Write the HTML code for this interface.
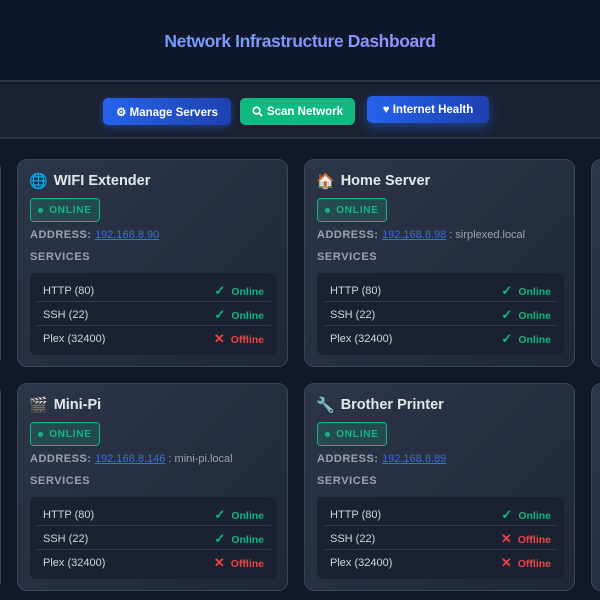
<!DOCTYPE html>
<html><head><style>
*{box-sizing:border-box;margin:0;padding:0}
body{width:600px;height:600px;overflow:hidden;background:#111827;font-family:"Liberation Sans",sans-serif;position:relative}
.hdr{position:absolute;left:0;top:0;width:600px;height:82px;background:#0f172a;border-bottom:2px solid #2a3446}
.hdr h1{position:absolute;top:31px;width:100%;text-align:center;font-size:17.5px;font-weight:bold;background:linear-gradient(90deg,#60a5fa,#a78bfa);-webkit-background-clip:text;color:transparent;letter-spacing:-0.4px}
.bar{position:absolute;left:0;top:84px;width:600px;height:55px;background:#1a2232;border-bottom:2px solid #2a3446}
.btn{position:absolute;height:27px;border-radius:5px;color:#fff;font-size:11.5px;font-weight:bold;display:flex;align-items:center;justify-content:center;gap:4px}
.blue{background:linear-gradient(90deg,#2563eb,#1e40af);box-shadow:0 2px 8px rgba(37,99,235,.4)}
.green{background:#10b981}
.card{position:absolute;width:271px;height:208px;border-radius:10px;background:linear-gradient(135deg,#2c3649,#1f2838);border:1px solid #3a4558;padding:0 12px}
.t{position:absolute;left:11px;top:12px;font-size:14.5px;font-weight:bold;color:#e5e7eb;display:flex;align-items:center;gap:6px}
.t span.i{font-size:15px;font-family:"DejaVu Sans",sans-serif}
.pill{position:absolute;left:12px;top:38px;width:70px;height:24px;border:1px solid #10b981;border-radius:4px;background:rgba(16,185,129,.18);color:#10b981;font-size:10px;font-weight:bold;letter-spacing:.8px;display:flex;align-items:center;justify-content:center;gap:6px}
.pill:before{content:"";width:5px;height:5px;border-radius:50%;background:#10b981}
.addr{position:absolute;left:12px;top:69px;font-size:11px;color:#9ca3af;font-weight:bold;letter-spacing:.5px}
.addr a{color:#3b6fd8;text-decoration:underline;font-weight:normal;letter-spacing:0}
.addr i{font-style:normal;font-weight:normal;letter-spacing:0}
.sv{position:absolute;left:12px;top:91px;font-size:11px;color:#9ca3af;font-weight:bold;letter-spacing:.6px}
.box{position:absolute;left:12px;top:113px;width:247px;height:82px;background:#1a2231;border-radius:6px;padding:5px 6px}
.r{height:24px;display:flex;justify-content:space-between;align-items:center;padding:2px 7px 0;font-size:11px;color:#d1d5db;border-bottom:1px solid #2e3848}
.r:last-child{border-bottom:none}
.on{color:#10b981;font-weight:bold;font-size:10.5px}
.off{color:#ef4444;font-weight:bold;font-size:10.5px}
.on b,.off b{font-size:13px;margin-right:6px}
</style></head><body>
<div class="hdr"><h1>Network Infrastructure Dashboard</h1></div>
<div class="bar"></div>
<div class="btn blue" style="left:103px;top:98px;width:128px">⚙ Manage Servers</div>
<div class="btn green" style="left:240px;top:98px;width:115px"><svg width="11" height="11" viewBox="0 0 12 12"><circle cx="5" cy="5" r="3.6" fill="none" stroke="#fff" stroke-width="1.8"/><path d="M7.6 7.6L11 11" stroke="#fff" stroke-width="2"/></svg>Scan Network</div>
<div class="btn blue" style="left:367px;top:96px;width:122px;box-shadow:0 4px 12px rgba(37,99,235,.5)">♥ Internet Health</div>

<div class="card" style="left:-270px;top:159px"></div>
<div class="card" style="left:591px;top:159px"></div>
<div class="card" style="left:-270px;top:383px"></div>
<div class="card" style="left:591px;top:383px"></div>

<div class="card" style="left:17px;top:159px">
<div class="t"><span class="i">🌐</span>WIFI Extender</div>
<div class="pill">ONLINE</div>
<div class="addr">ADDRESS: <a>192.168.8.90</a></div>
<div class="sv">SERVICES</div>
<div class="box">
<div class="r"><span>HTTP (80)</span><span class="on"><b>✓</b>Online</span></div>
<div class="r"><span>SSH (22)</span><span class="on"><b>✓</b>Online</span></div>
<div class="r"><span>Plex (32400)</span><span class="off"><b>✕</b>Offline</span></div>
</div></div>

<div class="card" style="left:304px;top:159px">
<div class="t"><span class="i">🏠</span>Home Server</div>
<div class="pill">ONLINE</div>
<div class="addr">ADDRESS: <a>192.168.8.98</a><i> : sirplexed.local</i></div>
<div class="sv">SERVICES</div>
<div class="box">
<div class="r"><span>HTTP (80)</span><span class="on"><b>✓</b>Online</span></div>
<div class="r"><span>SSH (22)</span><span class="on"><b>✓</b>Online</span></div>
<div class="r"><span>Plex (32400)</span><span class="on"><b>✓</b>Online</span></div>
</div></div>

<div class="card" style="left:17px;top:383px">
<div class="t"><span class="i">🎬</span>Mini-Pi</div>
<div class="pill">ONLINE</div>
<div class="addr">ADDRESS: <a>192.168.8.146</a><i> : mini-pi.local</i></div>
<div class="sv">SERVICES</div>
<div class="box">
<div class="r"><span>HTTP (80)</span><span class="on"><b>✓</b>Online</span></div>
<div class="r"><span>SSH (22)</span><span class="on"><b>✓</b>Online</span></div>
<div class="r"><span>Plex (32400)</span><span class="off"><b>✕</b>Offline</span></div>
</div></div>

<div class="card" style="left:304px;top:383px">
<div class="t"><span class="i">🔧</span>Brother Printer</div>
<div class="pill">ONLINE</div>
<div class="addr">ADDRESS: <a>192.168.8.89</a></div>
<div class="sv">SERVICES</div>
<div class="box">
<div class="r"><span>HTTP (80)</span><span class="on"><b>✓</b>Online</span></div>
<div class="r"><span>SSH (22)</span><span class="off"><b>✕</b>Offline</span></div>
<div class="r"><span>Plex (32400)</span><span class="off"><b>✕</b>Offline</span></div>
</div></div>
</body></html>
